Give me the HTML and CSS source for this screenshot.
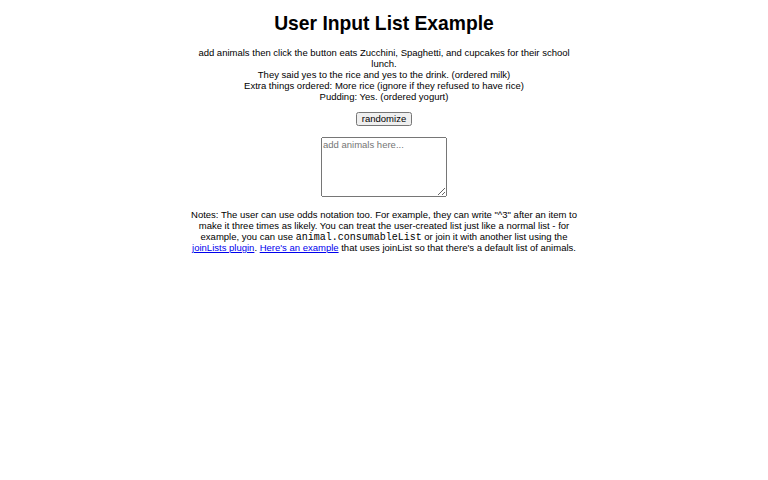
FILE: index.html
```html
<!DOCTYPE html>
<html lang="en">
<head>
    <meta charset="UTF-8">
    <title>User Input List Example</title>
    <link rel="stylesheet" href="styles.css">
</head>
<body>
    <h1>User Input List Example</h1>

    <div class="output">
        add animals then click the button eats Zucchini, Spaghetti, and cupcakes for their school lunch.<br>
        They said yes to the rice and yes to the drink. (ordered milk)<br>
        Extra things ordered: More rice (ignore if they refused to have rice)<br>
        Pudding: Yes. (ordered yogurt)
    </div>

    <button class="randomize">randomize</button>

    <textarea class="animals" placeholder="add animals here..."></textarea>

    <p class="notes">
        Notes: The user can use odds notation too. For example, they can write "^3" after an item to make it three times as likely. You can treat the user-created list just like a normal list - for example, you can use <code>animal.consumableList</code> or join it with another list using the <a href="#">joinLists plugin</a>. <a href="#">Here's an example</a> that uses joinList so that there's a default list of animals.
    </p>
</body>
</html>
```

FILE: styles.css
```css
body {
    font-family: "Liberation Sans", Arial, sans-serif;
    font-size: 9.5px;
    line-height: 11px;
    color: #000;
    text-align: center;
    margin: 0;
    padding-top: 11px;
}
h1 {
    font-size: 19.3px;
    line-height: 23px;
    margin: 1px 0 12px;
}
.output {
    width: 396px;
    margin: 0 auto;
}
.randomize {
    font-family: inherit;
    font-size: 9.5px;
    line-height: 10px;
    height: 14px;
    margin-top: 10px;
    padding: 0 4px;
}
.animals {
    display: block;
    box-sizing: border-box;
    width: 126px;
    height: 60px;
    margin: 11px auto 0;
    padding: 1px;
    font-family: inherit;
    font-size: 9.5px;
    line-height: 11px;
}
.notes {
    width: 396px;
    margin: 12px auto 0;
}
code {
    font-family: "Liberation Mono", "Courier New", monospace;
    font-size: 10px;
    line-height: 9px;
}
a, a:visited { color: #00e; }
```
